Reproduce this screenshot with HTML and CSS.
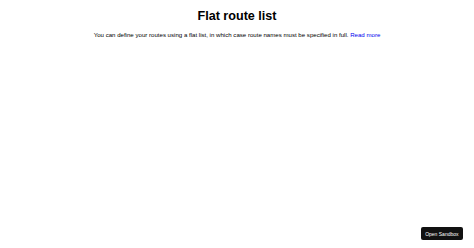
FILE: index.html
```html
<!DOCTYPE html>
<html>
<head>
<meta charset="utf-8">
<link rel="stylesheet" href="styles.css">
</head>
<body>
<main class="page">
  <h1 class="title">Flat route list</h1>
  <p class="intro">You can define your routes using a flat list, in which case route names must be specified in full. <a href="#" class="link">Read more</a></p>
</main>
<a class="sandbox" href="#">Open Sandbox</a>
</body>
</html>
```
FILE: styles.css
```css
html, body {
  margin: 0;
  padding: 0;
  background: #ffffff;
}
body {
  font-family: "Liberation Sans", Arial, sans-serif;
  color: #000;
}
.page {
  text-align: center;
}
.title {
  font-size: 12.6px;
  font-weight: bold;
  margin: 8.5px 0 0;
  line-height: normal;
}
.intro {
  font-size: 6.1px;
  margin: 8.5px 0 0;
  line-height: normal;
}
.link {
  color: #0000ee;
  text-decoration: none;
  border-bottom: 1px solid #0000ee;
}
.sandbox {
  position: fixed;
  right: 11px;
  bottom: 8px;
  background: #111;
  color: #fff;
  font-size: 5px;
  line-height: 6px;
  padding: 3.5px 4.5px;
  border-radius: 2px;
  text-decoration: none;
}
```
